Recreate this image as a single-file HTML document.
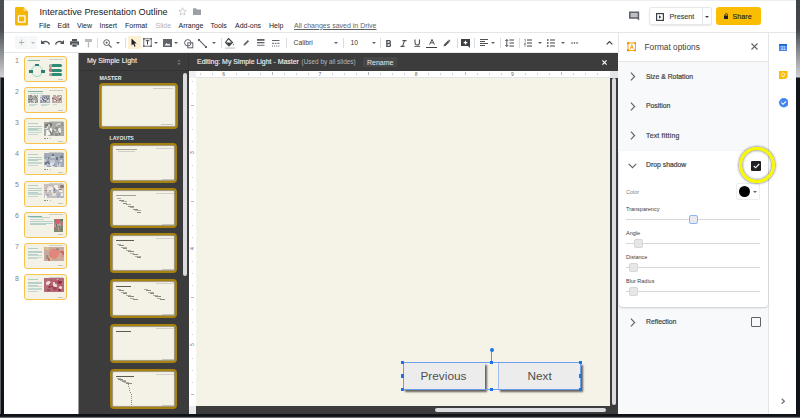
<!DOCTYPE html>
<html><head><meta charset="utf-8">
<style>
*{margin:0;padding:0;box-sizing:border-box}
html,body{width:800px;height:418px;overflow:hidden;background:#fff;font-family:"Liberation Sans",sans-serif;color:#202124}
.a{position:absolute}
.t{position:absolute;white-space:nowrap;line-height:1}
#topband{left:0;top:0;width:800px;height:1px;background:#eceef0}
.menu span{position:absolute;white-space:nowrap;font-size:7px;color:#202124;line-height:1}
.sep{position:absolute;top:38px;width:1px;height:10px;background:#dadce0}
.dd{position:absolute;top:42px;width:0;height:0;border-left:2px solid transparent;border-right:2px solid transparent;border-top:2px solid #5f6368}
.thumb{position:absolute;left:24px;width:43px;height:26px;border:1.8px solid #f7c34a;border-radius:3px;background:#f4f2e7;overflow:hidden}
.num{position:absolute;left:13px;font-size:7px;color:#80868b;width:8px;text-align:center;line-height:1}
.lthumb{position:absolute;width:68px;height:40px;border:2px solid #a8820f;border-radius:4px;background:#f4f2e7;box-shadow:inset 0 0 0.8px 0.5px #4a3e14;overflow:hidden}
.fo-row{position:absolute;left:646px;font-size:7.6px;color:#3c4043;line-height:1;-webkit-text-stroke:0.2px #3c4043;transform:scaleX(0.9);transform-origin:0 0}
.chev{position:absolute;width:5px;height:5px;border-right:1.3px solid #5f6368;border-bottom:1.3px solid #5f6368}
.lbl{position:absolute;left:626px;font-size:5.5px;color:#3c4043;line-height:1}
.sl{position:absolute;left:626px;width:134px;height:1px;background:#d5d7da}
.knob{position:absolute;width:9px;height:9px;border-radius:2px;background:#e6e6e6;border:1px solid #d7d7d7}
.h{position:absolute;width:3.3px;height:3.3px;background:#1a73e8}
</style></head><body>
<!-- frame edges -->
<div class="a" id="topband"></div>

<!-- HEADER -->
<svg class="a" style="left:15px;top:7.2px" width="13.2" height="18.4" viewBox="0 0 13.2 18.4">
<path d="M1.4 0H8.6L13.2 4.6V17A1.4 1.4 0 0 1 11.8 18.4H1.4A1.4 1.4 0 0 1 0 17V1.4A1.4 1.4 0 0 1 1.4 0Z" fill="#f5b705"/>
<path d="M8.6 0L13.2 4.6H9.6A1 1 0 0 1 8.6 3.6Z" fill="#fbd774"/>
<path d="M8.6 4.6H13.2V6.8Z" fill="#e3a000" opacity="0.6"/>
<rect x="3.4" y="9" width="6.6" height="6.2" rx="0.4" fill="none" stroke="#fff" stroke-width="1.25"/>
</svg>
<div class="t" style="left:39.5px;top:7.6px;font-size:9.2px;color:#202124">Interactive Presentation Outline</div>
<svg class="a" style="left:178px;top:7px" width="9" height="9" viewBox="0 0 24 24"><path d="M12 2l2.9 6.9 7.1.6-5.4 4.7 1.6 7L12 17.3 5.8 21.2l1.6-7L2 9.5l7.1-.6z" fill="none" stroke="#bdc1c6" stroke-width="2"/></svg>
<svg class="a" style="left:192.9px;top:7.9px" width="8" height="7" viewBox="0 0 8 7"><path d="M0 0.8V7H8V1.6H3.8L3 0.3H0.5Z" fill="#9aa0a6"/></svg>
<div class="menu">
<span style="left:39px;top:21.5px">File</span>
<span style="left:57.5px;top:21.5px">Edit</span>
<span style="left:77px;top:21.5px">View</span>
<span style="left:99.5px;top:21.5px">Insert</span>
<span style="left:125px;top:21.5px">Format</span>
<span style="left:155.5px;top:21.5px;color:#b0b3b8">Slide</span>
<span style="left:178.5px;top:21.5px">Arrange</span>
<span style="left:210.5px;top:21.5px">Tools</span>
<span style="left:235px;top:21.5px">Add-ons</span>
<span style="left:269px;top:21.5px">Help</span>
<span style="left:294px;top:21.5px;color:#5f6368;text-decoration:underline">All changes saved in Drive</span>
</div>
<!-- comment icon -->
<svg class="a" style="left:629px;top:11.3px" width="10.5" height="10" viewBox="0 0 10.5 10"><path d="M0 0.4H10.2V9.8L8.2 7.8H0Z" fill="#5f6368"/><rect x="1.6" y="2" width="7" height="4.2" fill="#c4c7ca"/><path d="M1.6 3.4H8.6M1.6 4.8H8.6" stroke="#aeb1b5" stroke-width="0.5"/></svg>
<!-- present -->
<div class="a" style="left:649px;top:7.3px;width:63px;height:18.2px;border:1px solid #e6e8eb;border-radius:3px;background:#fff;box-shadow:0 0.5px 1px rgba(60,64,67,.12)"></div>
<div class="a" style="left:701.5px;top:8px;width:1px;height:17px;background:#e6e8eb"></div>
<svg class="a" style="left:656px;top:12.5px" width="8" height="8" viewBox="0 0 8 8"><rect x="0.6" y="0.6" width="6.8" height="6.8" fill="none" stroke="#3c4043" stroke-width="1.2"/><path d="M3 2.3L5.4 4 3 5.7Z" fill="#3c4043"/></svg>
<div class="t" style="left:669.5px;top:12.5px;font-size:7.2px;color:#3c4043;-webkit-text-stroke:0.12px #3c4043">Present</div>
<div class="dd" style="left:704.5px;top:16px;border-top-color:#3c4043"></div>
<!-- share -->
<div class="a" style="left:716px;top:7.2px;width:44.5px;height:18.3px;border-radius:3px;background:#fbbc04"></div>
<svg class="a" style="left:723.7px;top:13.2px" width="4.6" height="6" viewBox="0 0 4.6 6"><path d="M1 2.6V1.9A1.3 1.3 0 0 1 3.6 1.9V2.6" fill="none" stroke="#202124" stroke-width="0.8"/><rect x="0" y="2.5" width="4.6" height="3.5" rx="0.4" fill="#202124"/></svg>
<div class="t" style="left:732.5px;top:12.5px;font-size:7.2px;color:#202124;-webkit-text-stroke:0.12px #202124">Share</div>

<!-- TOOLBAR -->
<div class="a" style="left:0;top:32px;width:800px;height:1px;background:#e3e5e8"></div>
<div class="a" style="left:0;top:52px;width:618px;height:1px;background:#e3e5e8"></div>
<div class="a" style="left:15px;top:36px;width:22px;height:13px;background:#f6f7f8"></div>
<div class="a" style="left:28px;top:36px;width:0.8px;height:13px;background:#fcfcfd"></div>
<div class="t" style="left:18.5px;top:37.5px;font-size:10px;color:#a8abb0">+</div>
<div class="dd" style="left:31px;border-top-color:#b8bbbf"></div>
<!-- undo/redo -->
<svg class="a" style="left:41px;top:39px" width="9" height="6" viewBox="0 0 9 6"><path d="M8.5 5.5C7.5 2.5 4 1.5 1.5 3.5" fill="none" stroke="#4f5358" stroke-width="1.4"/><path d="M0 1V5H4Z" fill="#4f5358"/></svg>
<svg class="a" style="left:55px;top:39px" width="9" height="6" viewBox="0 0 9 6"><path d="M0.5 5.5C1.5 2.5 5 1.5 7.5 3.5" fill="none" stroke="#4f5358" stroke-width="1.4"/><path d="M9 1V5H5Z" fill="#4f5358"/></svg>
<svg class="a" style="left:70px;top:38.5px" width="9" height="8" viewBox="0 0 9 8"><rect x="2" y="0" width="5" height="2" fill="#4f5358"/><rect x="0" y="2.2" width="9" height="4" rx="1" fill="#4f5358"/><rect x="2" y="5" width="5" height="3" fill="#4f5358" stroke="#fff" stroke-width="0.6"/></svg>
<svg class="a" style="left:84.5px;top:38.5px" width="7" height="9" viewBox="0 0 7 9"><rect x="0" y="0" width="7" height="3" fill="#b8bbbf"/><path d="M3.5 3V8.5" stroke="#b8bbbf" stroke-width="1.4"/></svg>
<div class="sep" style="left:97px"></div>
<svg class="a" style="left:102.5px;top:39px" width="9" height="9" viewBox="0 0 9 9"><circle cx="3.6" cy="3.6" r="2.9" fill="none" stroke="#5f6368" stroke-width="1"/><path d="M5.6 5.6L8.5 8.5" stroke="#5f6368" stroke-width="1.2"/><path d="M3.6 2.3V4.9M2.3 3.6H4.9" stroke="#5f6368" stroke-width="0.7"/></svg>
<div class="dd" style="left:116px"></div>
<div class="sep" style="left:124.5px"></div>
<div class="a" style="left:127.5px;top:36px;width:13px;height:12.5px;background:#fdf0d4;border-radius:1px"></div>
<svg class="a" style="left:131px;top:38px" width="6" height="9" viewBox="0 0 6 9"><path d="M0.5 0.5V7.5L2.2 6 3.5 8.7 4.6 8.2 3.4 5.6H5.7Z" fill="#202124"/></svg>
<svg class="a" style="left:142.5px;top:38px" width="9" height="9" viewBox="0 0 9 9"><rect x="0.8" y="0.8" width="7.4" height="7.4" fill="none" stroke="#5f6368" stroke-width="0.9"/><rect x="0" y="0" width="1.6" height="1.6" fill="#5f6368"/><rect x="7.4" y="0" width="1.6" height="1.6" fill="#5f6368"/><rect x="0" y="7.4" width="1.6" height="1.6" fill="#5f6368"/><rect x="7.4" y="7.4" width="1.6" height="1.6" fill="#5f6368"/><path d="M2.7 2.7H6.3M4.5 2.7V6.5" stroke="#3c4043" stroke-width="1"/></svg>
<div class="dd" style="left:154px"></div>
<svg class="a" style="left:162.5px;top:38.5px" width="9" height="8" viewBox="0 0 9 8"><rect x="0" y="0" width="9" height="8" fill="#5f6368"/><path d="M1.5 6.5L3.5 4 5 5.5 6 4.5 7.5 6.5Z" fill="#fff"/></svg>
<div class="dd" style="left:174px"></div>
<svg class="a" style="left:183.5px;top:38.5px" width="10" height="10" viewBox="0 0 10 10"><circle cx="3.8" cy="3.8" r="3.2" fill="none" stroke="#5f6368" stroke-width="1"/><rect x="3.8" y="3.8" width="5" height="5" fill="none" stroke="#5f6368" stroke-width="1"/></svg>
<svg class="a" style="left:198px;top:38.5px" width="9" height="9" viewBox="0 0 9 9"><path d="M1.2 1.2L7.8 7.8" stroke="#5f6368" stroke-width="1.1"/><rect x="0" y="0" width="2" height="2" fill="#5f6368"/><rect x="7" y="7" width="2" height="2" fill="#5f6368"/></svg>
<div class="dd" style="left:211.5px"></div>
<div class="sep" style="left:221px"></div>
<svg class="a" style="left:225px;top:37.5px" width="10" height="11" viewBox="0 0 10 11"><path d="M3.5 0.5L7.5 4.5 4 8 0.5 4.5Z" fill="none" stroke="#3c4043" stroke-width="1.1"/><path d="M1 4.5H7L4 7.5Z" fill="#3c4043"/><path d="M8.5 5.5Q9.5 7 8.5 7.5Q7.5 7 8.5 5.5Z" fill="#3c4043"/><rect x="0" y="9.5" width="10" height="1.2" fill="#c6c8cb"/></svg>
<svg class="a" style="left:242.5px;top:38.5px" width="7" height="7" viewBox="0 0 7 7"><path d="M0.4 6.6L0.8 4.9 4.8 0.9 6.1 2.2 2.1 6.2Z" fill="#5f6368"/></svg>
<svg class="a" style="left:257px;top:39.2px" width="7.5" height="7" viewBox="0 0 7.5 7"><rect x="0" y="0" width="7.5" height="1.8" fill="#5f6368"/><rect x="0" y="3" width="7.5" height="1.3" fill="#5f6368"/><rect x="0" y="5.8" width="7.5" height="0.9" fill="#5f6368"/></svg>
<svg class="a" style="left:272px;top:39.8px" width="7.5" height="7" viewBox="0 0 7.5 7"><rect x="0" y="0" width="7.5" height="1" fill="#5f6368"/><path d="M0 3.3H2.2M3 3.3H4.5M5.3 3.3H7.5M0 6H1M2.1 6H3.1M4.2 6H5.2M6.3 6H7.3" stroke="#5f6368" stroke-width="1"/></svg>
<div class="sep" style="left:285.5px"></div>
<div class="t" style="left:293.5px;top:40px;font-size:6.8px;color:#3c4043">Calibri</div>
<div class="dd" style="left:333.5px"></div>
<div class="sep" style="left:342.5px"></div>
<div class="t" style="left:350.5px;top:39.5px;font-size:6.8px;color:#3c4043">10</div>
<div class="dd" style="left:371.5px"></div>
<div class="sep" style="left:379.5px"></div>
<svg class="a" style="left:386px;top:39.5px" width="6" height="7" viewBox="0 0 6 7"><path d="M0.8 0.6H3.3A1.5 1.5 0 0 1 3.3 3.5H0.8ZM0.8 3.5H3.6A1.6 1.6 0 0 1 3.6 6.4H0.8Z" fill="none" stroke="#4d5156" stroke-width="1.3"/></svg>
<svg class="a" style="left:399.5px;top:39.5px" width="7" height="7" viewBox="0 0 7 7"><path d="M2.5 0.6H6.5M0.5 6.4H4.5M4.5 0.6L2.5 6.4" fill="none" stroke="#4d5156" stroke-width="1.1"/></svg>
<svg class="a" style="left:414px;top:39px" width="6.5" height="8" viewBox="0 0 6.5 8"><path d="M1 0.5V3.8A2.25 2.25 0 0 0 5.5 3.8V0.5" fill="none" stroke="#4d5156" stroke-width="1.1"/><path d="M0.3 7.4H6.2" stroke="#4d5156" stroke-width="0.9"/></svg>
<svg class="a" style="left:428.5px;top:39px" width="6" height="6" viewBox="0 0 6 6"><path d="M0.5 5.6L3 0.4 5.5 5.6M1.4 3.8H4.6" fill="none" stroke="#4d5156" stroke-width="1"/></svg>
<div class="a" style="left:426.3px;top:46.7px;width:10.5px;height:1.8px;background:#3c4043"></div>
<svg class="a" style="left:443px;top:38.5px" width="8" height="8" viewBox="0 0 8 8"><path d="M0.5 7.5L1.3 5.2 5 1.5 6.5 3 2.8 6.7Z" fill="#4d5156"/><path d="M5.6 0.9L7.1 2.4" stroke="#4d5156" stroke-width="1.2"/></svg>
<div class="sep" style="left:456.5px"></div>
<svg class="a" style="left:461px;top:38.5px" width="9" height="9" viewBox="0 0 9 9"><path d="M0 0H9V9L7 7H0Z" fill="#3c4043"/><path d="M4.5 1.8V5.4M2.7 3.6H6.3" stroke="#fff" stroke-width="1.1"/></svg>
<div class="sep" style="left:473.5px"></div>
<svg class="a" style="left:480px;top:39px" width="8" height="7" viewBox="0 0 8 7"><path d="M0 0.5H8M0 2.5H5M0 4.5H8M0 6.5H5" stroke="#3c4043" stroke-width="0.9"/></svg>
<div class="dd" style="left:490.5px"></div>
<div class="sep" style="left:499.5px"></div>
<svg class="a" style="left:504.5px;top:38.5px" width="9" height="8" viewBox="0 0 9 8"><path d="M1.8 0.5V7.5M0.3 2L1.8 0.5 3.3 2M0.3 6L1.8 7.5 3.3 6" fill="none" stroke="#3c4043" stroke-width="0.9"/><path d="M4.5 1H9M4.5 4H9M4.5 7H9" stroke="#3c4043" stroke-width="1"/></svg>
<div class="sep" style="left:518.5px"></div>
<svg class="a" style="left:524px;top:38.5px" width="8" height="8" viewBox="0 0 8 8"><path d="M0.5 0.5H1.3V2.5M0.3 4H1.6L0.3 5.5H1.8M0.3 7H1.8" fill="none" stroke="#3c4043" stroke-width="0.6"/><path d="M3 1H8M3 4H8M3 7H8" stroke="#3c4043" stroke-width="1"/></svg>
<div class="dd" style="left:537.5px"></div>
<svg class="a" style="left:547px;top:38.5px" width="8" height="8" viewBox="0 0 8 8"><path d="M0 1H1.5M0 4H1.5M0 7H1.5" stroke="#3c4043" stroke-width="1.3"/><path d="M3 1H8M3 4H8M3 7H8" stroke="#3c4043" stroke-width="1"/></svg>
<div class="dd" style="left:560.5px"></div>
<svg class="a" style="left:571px;top:41.5px" width="7" height="2" viewBox="0 0 7 2"><circle cx="1" cy="1" r="0.8" fill="#3c4043"/><circle cx="3.5" cy="1" r="0.8" fill="#3c4043"/><circle cx="6" cy="1" r="0.8" fill="#3c4043"/></svg>
<svg class="a" style="left:605.5px;top:40px" width="7" height="5" viewBox="0 0 7 5"><path d="M0.7 4.3L3.5 1.5 6.3 4.3" fill="none" stroke="#3c4043" stroke-width="1.2"/></svg>

<!-- FILMSTRIP -->
<div class="a" style="left:78px;top:53px;width:1px;height:361px;background:#9a9a9a"></div>
<div class="num" style="top:56.5px">1</div>
<div class="thumb" style="top:56.0px"><div class="a" style="left:2.5px;top:3.2px;width:12px;height:0.8px;background:#7ab5a8;"></div><div class="a" style="left:24px;top:1.5px;width:14px;height:0.6px;background:#cfcfc5;"></div><div class="a" style="left:5.5px;top:7.5px;width:12.5px;height:12.5px;border-radius:50%;border:1.1px solid #8fdccd"></div><div class="a" style="left:9.8px;top:6.8px;width:4px;height:2.5px;background:#2f7f6f;"></div><div class="a" style="left:4px;top:13.2px;width:4px;height:2.5px;background:#2f7f6f;"></div><div class="a" style="left:15.5px;top:13.2px;width:4px;height:2.5px;background:#2f7f6f;"></div><div class="a" style="left:25.5px;top:7.4px;width:11.5px;height:3.0px;background:#2f8a77;border-radius:1.5px;"></div><div class="a" style="left:23.5px;top:7.2px;width:3.4px;height:3.4px;border-radius:50%;background:#a8a8a2"></div><div class="a" style="left:25.5px;top:11.600000000000001px;width:11.5px;height:3.0px;background:#2f8a77;border-radius:1.5px;"></div><div class="a" style="left:23.5px;top:11.4px;width:3.4px;height:3.4px;border-radius:50%;background:#b87070"></div><div class="a" style="left:25.5px;top:15.8px;width:11.5px;height:3.0px;background:#2f8a77;border-radius:1.5px;"></div><div class="a" style="left:23.5px;top:15.600000000000001px;width:3.4px;height:3.4px;border-radius:50%;background:#ab9e86"></div><div class="a" style="left:33px;top:21.5px;width:5px;height:0.8px;background:#c8c8c0;"></div></div>
<div class="num" style="top:87.7px">2</div>
<div class="thumb" style="top:87.2px"><div class="a" style="left:2.5px;top:3.2px;width:15px;height:0.8px;background:#7ab5a8;"></div><div class="a" style="left:24px;top:1.5px;width:14px;height:0.6px;background:#cfcfc5;"></div><div class="a" style="left:4.5px;top:5.3px;width:13.299999999999999px;height:0.8px;background:#c6d9d2;"></div><div class="a" style="left:2.8px;top:6.6px;width:10px;height:8px;background:#a8a8a4;"></div><div class="a" style="left:6.15px;top:10.6px;width:0.93px;height:1.38px;background:#8a8a86;border-radius:40%;"></div><div class="a" style="left:10.6px;top:9.67px;width:1.41px;height:1.46px;background:#8a8a86;border-radius:40%;"></div><div class="a" style="left:7.07px;top:11.62px;width:0.93px;height:1.99px;background:#e0e0dc;border-radius:40%;"></div><div class="a" style="left:4.85px;top:7.54px;width:1.16px;height:1.81px;background:#8a8a86;border-radius:40%;"></div><div class="a" style="left:9.68px;top:7.77px;width:1.15px;height:0.66px;background:#8a8a86;border-radius:40%;"></div><div class="a" style="left:10.49px;top:8.3px;width:0.66px;height:1.7px;background:#8a8a86;border-radius:40%;"></div><div class="a" style="left:8.79px;top:12.28px;width:1.61px;height:1.84px;background:#e0e0dc;border-radius:40%;"></div><div class="a" style="left:10.88px;top:7.48px;width:1.62px;height:1.42px;background:#e0e0dc;border-radius:40%;"></div><div class="a" style="left:4.81px;top:13.53px;width:0.74px;height:0.82px;background:#e0e0dc;border-radius:40%;"></div><div class="a" style="left:6.3px;top:11.76px;width:1.69px;height:1.8px;background:#8a8a86;border-radius:40%;"></div><div class="a" style="left:8.0px;top:12.54px;width:1.09px;height:1.44px;background:#8a8a86;border-radius:40%;"></div><div class="a" style="left:5.07px;top:11.04px;width:1.88px;height:0.68px;background:#8a8a86;border-radius:40%;"></div><div class="a" style="left:11.65px;top:12.2px;width:0.83px;height:1.81px;background:#8a8a86;border-radius:40%;"></div><div class="a" style="left:8.66px;top:12.99px;width:0.75px;height:1.53px;background:#e0e0dc;border-radius:40%;"></div><div class="a" style="left:10.49px;top:13.8px;width:1.0px;height:0.73px;background:#6e6e6a;border-radius:40%;"></div><div class="a" style="left:10.8px;top:6.75px;width:1.08px;height:0.73px;background:#e0e0dc;border-radius:40%;"></div><div class="a" style="left:3.17px;top:10.39px;width:1.68px;height:1.83px;background:#6e6e6a;border-radius:40%;"></div><div class="a" style="left:7.69px;top:12.65px;width:1.13px;height:1.44px;background:#e0e0dc;border-radius:40%;"></div><div class="a" style="left:5.49px;top:7.06px;width:1.31px;height:2.0px;background:#8a8a86;border-radius:40%;"></div><div class="a" style="left:11.2px;top:8.37px;width:1.35px;height:1.93px;background:#e0e0dc;border-radius:40%;"></div><div class="a" style="left:10.77px;top:8.89px;width:0.82px;height:0.7px;background:#6e6e6a;border-radius:40%;"></div><div class="a" style="left:6.55px;top:10.16px;width:1.86px;height:1.15px;background:#8a8a86;border-radius:40%;"></div><div class="a" style="left:3.64px;top:12.86px;width:1.81px;height:1.57px;background:#8a8a86;border-radius:40%;"></div><div class="a" style="left:9.26px;top:12.68px;width:0.98px;height:1.5px;background:#e0e0dc;border-radius:40%;"></div><div class="a" style="left:7.2px;top:6.68px;width:1.97px;height:1.35px;background:#e0e0dc;border-radius:40%;"></div><div class="a" style="left:5.82px;top:10.68px;width:1.98px;height:1.07px;background:#6e6e6a;border-radius:40%;"></div><div class="a" style="left:7.14px;top:11.02px;width:0.68px;height:1.49px;background:#e0e0dc;border-radius:40%;"></div><div class="a" style="left:6.98px;top:10.71px;width:1.45px;height:1.02px;background:#8a8a86;border-radius:40%;"></div><div class="a" style="left:14.8px;top:6.6px;width:10px;height:8px;background:#a4aab4;"></div><div class="a" style="left:20.68px;top:8.65px;width:0.63px;height:1.14px;background:#8b9aae;border-radius:40%;"></div><div class="a" style="left:17.6px;top:9.13px;width:1.05px;height:1.13px;background:#8b9aae;border-radius:40%;"></div><div class="a" style="left:15.75px;top:11.71px;width:0.97px;height:1.71px;background:#8b9aae;border-radius:40%;"></div><div class="a" style="left:19.02px;top:11.29px;width:1.56px;height:0.82px;background:#d8dce2;border-radius:40%;"></div><div class="a" style="left:18.75px;top:11.56px;width:0.93px;height:0.89px;background:#6e7480;border-radius:40%;"></div><div class="a" style="left:20.58px;top:7.96px;width:1.44px;height:1.93px;background:#6e7480;border-radius:40%;"></div><div class="a" style="left:16.82px;top:10.21px;width:0.71px;height:1.65px;background:#d8dce2;border-radius:40%;"></div><div class="a" style="left:19.61px;top:7.97px;width:0.92px;height:0.8px;background:#8b9aae;border-radius:40%;"></div><div class="a" style="left:22.18px;top:11.08px;width:0.86px;height:1.02px;background:#8b9aae;border-radius:40%;"></div><div class="a" style="left:17.4px;top:12.3px;width:1.08px;height:0.82px;background:#d8dce2;border-radius:40%;"></div><div class="a" style="left:17.34px;top:10.29px;width:1.25px;height:1.5px;background:#6e7480;border-radius:40%;"></div><div class="a" style="left:14.84px;top:13.34px;width:1.89px;height:0.85px;background:#8b9aae;border-radius:40%;"></div><div class="a" style="left:22.42px;top:12.88px;width:1.98px;height:1.23px;background:#6e7480;border-radius:40%;"></div><div class="a" style="left:21.85px;top:11.64px;width:0.65px;height:1.26px;background:#d8dce2;border-radius:40%;"></div><div class="a" style="left:22.24px;top:11.88px;width:1.36px;height:1.85px;background:#d8dce2;border-radius:40%;"></div><div class="a" style="left:15.12px;top:12.24px;width:0.77px;height:0.97px;background:#8b9aae;border-radius:40%;"></div><div class="a" style="left:22.09px;top:10.14px;width:1.89px;height:1.86px;background:#6e7480;border-radius:40%;"></div><div class="a" style="left:19.19px;top:8.32px;width:1.27px;height:0.8px;background:#6e7480;border-radius:40%;"></div><div class="a" style="left:22.94px;top:10.76px;width:1.33px;height:1.2px;background:#d8dce2;border-radius:40%;"></div><div class="a" style="left:19.79px;top:11.5px;width:0.78px;height:1.96px;background:#6e7480;border-radius:40%;"></div><div class="a" style="left:19.56px;top:12.39px;width:1.09px;height:0.91px;background:#6e7480;border-radius:40%;"></div><div class="a" style="left:22.86px;top:7.5px;width:0.94px;height:1.01px;background:#6e7480;border-radius:40%;"></div><div class="a" style="left:18.29px;top:11.58px;width:1.28px;height:1.42px;background:#6e7480;border-radius:40%;"></div><div class="a" style="left:18.62px;top:9.74px;width:0.98px;height:1.36px;background:#6e7480;border-radius:40%;"></div><div class="a" style="left:15.18px;top:6.91px;width:1.8px;height:1.69px;background:#d8dce2;border-radius:40%;"></div><div class="a" style="left:15.49px;top:9.71px;width:1.96px;height:1.8px;background:#d8dce2;border-radius:40%;"></div><div class="a" style="left:18.34px;top:9.43px;width:0.82px;height:0.74px;background:#d8dce2;border-radius:40%;"></div><div class="a" style="left:17.72px;top:7.48px;width:1.11px;height:0.9px;background:#8b9aae;border-radius:40%;"></div><div class="a" style="left:26.8px;top:6.6px;width:10px;height:8px;background:#b9a8a4;"></div><div class="a" style="left:34.27px;top:10.21px;width:0.6px;height:1.62px;background:#ffffff;border-radius:40%;"></div><div class="a" style="left:33.75px;top:9.09px;width:1.12px;height:1.46px;background:#ffffff;border-radius:40%;"></div><div class="a" style="left:29.98px;top:9.96px;width:1.47px;height:1.23px;background:#d0b0a8;border-radius:40%;"></div><div class="a" style="left:30.55px;top:6.71px;width:1.04px;height:1.93px;background:#ffffff;border-radius:40%;"></div><div class="a" style="left:27.42px;top:9.33px;width:1.35px;height:1.59px;background:#8a6a64;border-radius:40%;"></div><div class="a" style="left:29.8px;top:13.69px;width:0.78px;height:0.68px;background:#d0b0a8;border-radius:40%;"></div><div class="a" style="left:30.65px;top:7.46px;width:1.71px;height:1.0px;background:#d0b0a8;border-radius:40%;"></div><div class="a" style="left:33.51px;top:10.71px;width:1.53px;height:1.85px;background:#d0b0a8;border-radius:40%;"></div><div class="a" style="left:34.07px;top:11.36px;width:1.05px;height:1.36px;background:#8a6a64;border-radius:40%;"></div><div class="a" style="left:27.21px;top:7.18px;width:0.8px;height:1.69px;background:#ffffff;border-radius:40%;"></div><div class="a" style="left:33.75px;top:8.94px;width:1.52px;height:1.15px;background:#ffffff;border-radius:40%;"></div><div class="a" style="left:31.31px;top:11.62px;width:0.64px;height:0.8px;background:#8a6a64;border-radius:40%;"></div><div class="a" style="left:27.11px;top:11.41px;width:1.41px;height:1.73px;background:#d0b0a8;border-radius:40%;"></div><div class="a" style="left:31.6px;top:7.3px;width:1.34px;height:0.96px;background:#d0b0a8;border-radius:40%;"></div><div class="a" style="left:32.05px;top:12.33px;width:0.69px;height:1.08px;background:#ffffff;border-radius:40%;"></div><div class="a" style="left:30.43px;top:11.14px;width:2.0px;height:1.52px;background:#8a6a64;border-radius:40%;"></div><div class="a" style="left:35.29px;top:10.24px;width:0.95px;height:1.46px;background:#ffffff;border-radius:40%;"></div><div class="a" style="left:35.05px;top:12.54px;width:1.13px;height:0.96px;background:#ffffff;border-radius:40%;"></div><div class="a" style="left:31.91px;top:12.69px;width:1.18px;height:1.41px;background:#d0b0a8;border-radius:40%;"></div><div class="a" style="left:34.63px;top:7.57px;width:1.28px;height:1.51px;background:#ffffff;border-radius:40%;"></div><div class="a" style="left:32.88px;top:12.97px;width:1.3px;height:1.3px;background:#d0b0a8;border-radius:40%;"></div><div class="a" style="left:29.04px;top:8.02px;width:1.61px;height:0.89px;background:#d0b0a8;border-radius:40%;"></div><div class="a" style="left:34.19px;top:9.88px;width:1.32px;height:1.91px;background:#8a6a64;border-radius:40%;"></div><div class="a" style="left:31.84px;top:10.22px;width:1.54px;height:1.8px;background:#8a6a64;border-radius:40%;"></div><div class="a" style="left:28.99px;top:12.18px;width:1.85px;height:1.06px;background:#ffffff;border-radius:40%;"></div><div class="a" style="left:29.75px;top:11.92px;width:0.84px;height:1.13px;background:#ffffff;border-radius:40%;"></div><div class="a" style="left:32.98px;top:7.92px;width:1.19px;height:1.59px;background:#d0b0a8;border-radius:40%;"></div><div class="a" style="left:31.39px;top:9.6px;width:1.77px;height:1.76px;background:#d0b0a8;border-radius:40%;"></div><div class="a" style="left:3.5px;top:15.5px;width:9px;height:0.8px;background:#c6d9d2;"></div><div class="a" style="left:3.5px;top:17.1px;width:6.3px;height:0.8px;background:#c6d9d2;"></div><div class="a" style="left:15.5px;top:15.5px;width:9px;height:0.8px;background:#c6d9d2;"></div><div class="a" style="left:15.5px;top:17.1px;width:6.3px;height:0.8px;background:#c6d9d2;"></div><div class="a" style="left:27.5px;top:15.5px;width:4.8999999999999995px;height:0.8px;background:#c6d9d2;"></div><div class="a" style="left:33px;top:21.5px;width:5px;height:0.8px;background:#c8c8c0;"></div></div>
<div class="num" style="top:118.8px">3</div>
<div class="thumb" style="top:118.3px"><div class="a" style="left:2.8px;top:3.8px;width:10px;height:0.9px;background:#b5d0c6;"></div><div class="a" style="left:24px;top:1.5px;width:14px;height:0.6px;background:#cfcfc5;"></div><div class="a" style="left:2.8px;top:6.8px;width:14.5px;height:0.8px;background:#b5d0c6;"></div><div class="a" style="left:2.8px;top:8.4px;width:14.5px;height:0.8px;background:#b5d0c6;"></div><div class="a" style="left:2.8px;top:10.0px;width:10.149999999999999px;height:0.8px;background:#b5d0c6;"></div><div class="a" style="left:2.8px;top:11.2px;width:14px;height:0.8px;background:#c3d8d0;"></div><div class="a" style="left:2.8px;top:12.799999999999999px;width:14px;height:0.8px;background:#c3d8d0;"></div><div class="a" style="left:2.8px;top:14.399999999999999px;width:9.799999999999999px;height:0.8px;background:#c3d8d0;"></div><div class="a" style="left:19px;top:2.8px;width:20.4px;height:14px;background:#a8a8a4;"></div><div class="a" style="left:33.86px;top:12.17px;width:1.43px;height:3.38px;background:#6e6e6a;border-radius:40%;"></div><div class="a" style="left:23.19px;top:11.65px;width:2.56px;height:1.67px;background:#6e6e6a;border-radius:40%;"></div><div class="a" style="left:22.98px;top:4.86px;width:3.96px;height:3.15px;background:#8e8e8a;border-radius:40%;"></div><div class="a" style="left:31.68px;top:3.22px;width:1.62px;height:2.6px;background:#8e8e8a;border-radius:40%;"></div><div class="a" style="left:22.43px;top:3.96px;width:1.71px;height:1.23px;background:#6e6e6a;border-radius:40%;"></div><div class="a" style="left:36.21px;top:3.24px;width:1.56px;height:1.75px;background:#d0d0cc;border-radius:40%;"></div><div class="a" style="left:19.12px;top:6.57px;width:2.88px;height:2.73px;background:#d0d0cc;border-radius:40%;"></div><div class="a" style="left:30.66px;top:12.22px;width:2.31px;height:1.31px;background:#d0d0cc;border-radius:40%;"></div><div class="a" style="left:21.15px;top:5.98px;width:2.34px;height:2.42px;background:#d0d0cc;border-radius:40%;"></div><div class="a" style="left:36.13px;top:3.84px;width:1.55px;height:3.23px;background:#8e8e8a;border-radius:40%;"></div><div class="a" style="left:26.76px;top:10.76px;width:3.16px;height:2.0px;background:#8e8e8a;border-radius:40%;"></div><div class="a" style="left:25.39px;top:8.82px;width:1.53px;height:3.37px;background:#f4f4f0;border-radius:40%;"></div><div class="a" style="left:25.64px;top:11.2px;width:1.55px;height:2.3px;background:#f4f4f0;border-radius:40%;"></div><div class="a" style="left:31.45px;top:4.5px;width:3.34px;height:2.66px;background:#8e8e8a;border-radius:40%;"></div><div class="a" style="left:21.05px;top:13.35px;width:3.77px;height:2.68px;background:#e8e8e4;border-radius:40%;"></div><div class="a" style="left:29.75px;top:7.57px;width:3.85px;height:2.66px;background:#8e8e8a;border-radius:40%;"></div><div class="a" style="left:24.41px;top:4.88px;width:3.07px;height:2.21px;background:#6e6e6a;border-radius:40%;"></div><div class="a" style="left:29.45px;top:9.97px;width:1.53px;height:1.55px;background:#d0d0cc;border-radius:40%;"></div><div class="a" style="left:25.96px;top:13.49px;width:2.25px;height:1.75px;background:#6e6e6a;border-radius:40%;"></div><div class="a" style="left:31.39px;top:9.1px;width:2.59px;height:1.77px;background:#8e8e8a;border-radius:40%;"></div><div class="a" style="left:32.33px;top:3.62px;width:3.92px;height:2.19px;background:#d0d0cc;border-radius:40%;"></div><div class="a" style="left:23.53px;top:4.06px;width:3.64px;height:1.39px;background:#6e6e6a;border-radius:40%;"></div><div class="a" style="left:20.97px;top:10.28px;width:2.84px;height:3.29px;background:#f4f4f0;border-radius:40%;"></div><div class="a" style="left:33.67px;top:11.12px;width:2.41px;height:2.89px;background:#f4f4f0;border-radius:40%;"></div><div class="a" style="left:32.92px;top:8.7px;width:2.96px;height:3.17px;background:#e8e8e4;border-radius:40%;"></div><div class="a" style="left:23.39px;top:12.49px;width:2.85px;height:1.6px;background:#6e6e6a;border-radius:40%;"></div><div class="a" style="left:25.83px;top:12.43px;width:3.63px;height:2.18px;background:#8e8e8a;border-radius:40%;"></div><div class="a" style="left:30.15px;top:14.03px;width:2.8px;height:2.51px;background:#8e8e8a;border-radius:40%;"></div><div class="a" style="left:19.5px;top:4.95px;width:3.78px;height:2.71px;background:#6e6e6a;border-radius:40%;"></div><div class="a" style="left:23.41px;top:4.72px;width:1.53px;height:2.92px;background:#d0d0cc;border-radius:40%;"></div><div class="a" style="left:22.94px;top:11.75px;width:1.79px;height:2.98px;background:#d0d0cc;border-radius:40%;"></div><div class="a" style="left:31.4px;top:4.66px;width:1.54px;height:1.79px;background:#d0d0cc;border-radius:40%;"></div><div class="a" style="left:19.86px;top:6.9px;width:3.49px;height:2.6px;background:#e8e8e4;border-radius:40%;"></div><div class="a" style="left:19.34px;top:6.77px;width:2.67px;height:2.31px;background:#8e8e8a;border-radius:40%;"></div><div class="a" style="left:21.24px;top:12.44px;width:3.71px;height:2.77px;background:#f4f4f0;border-radius:40%;"></div><div class="a" style="left:20.36px;top:15.52px;width:3.44px;height:1.2px;background:#e8e8e4;border-radius:40%;"></div><div class="a" style="left:19px;top:18.3px;width:1.6px;height:1.2px;background:#8a8a86;"></div><div class="a" style="left:21.8px;top:18.3px;width:1.6px;height:1.2px;background:#8a8a86;"></div><div class="a" style="left:24.6px;top:18.3px;width:1.2px;height:1.2px;background:#b8b8b4;"></div><div class="a" style="left:33px;top:21.5px;width:5px;height:0.8px;background:#c8c8c0;"></div></div>
<div class="num" style="top:149.9px">4</div>
<div class="thumb" style="top:149.4px"><div class="a" style="left:2.8px;top:3.8px;width:10px;height:0.9px;background:#b5d0c6;"></div><div class="a" style="left:24px;top:1.5px;width:14px;height:0.6px;background:#cfcfc5;"></div><div class="a" style="left:2.8px;top:6.8px;width:14.5px;height:0.8px;background:#b5d0c6;"></div><div class="a" style="left:2.8px;top:8.4px;width:14.5px;height:0.8px;background:#b5d0c6;"></div><div class="a" style="left:2.8px;top:10.0px;width:10.149999999999999px;height:0.8px;background:#b5d0c6;"></div><div class="a" style="left:2.8px;top:11.2px;width:14px;height:0.8px;background:#c3d8d0;"></div><div class="a" style="left:2.8px;top:12.799999999999999px;width:14px;height:0.8px;background:#c3d8d0;"></div><div class="a" style="left:2.8px;top:14.399999999999999px;width:9.799999999999999px;height:0.8px;background:#c3d8d0;"></div><div class="a" style="left:19px;top:2.8px;width:20.4px;height:14px;background:#a4acb8;"></div><div class="a" style="left:26.22px;top:11.0px;width:3.89px;height:3.17px;background:#c8ccd4;border-radius:40%;"></div><div class="a" style="left:26.46px;top:12.1px;width:2.13px;height:2.99px;background:#e6e8ea;border-radius:40%;"></div><div class="a" style="left:20.23px;top:12.81px;width:2.34px;height:2.25px;background:#e6e8ea;border-radius:40%;"></div><div class="a" style="left:27.04px;top:12.0px;width:3.08px;height:1.85px;background:#c8ccd4;border-radius:40%;"></div><div class="a" style="left:19.67px;top:5.83px;width:2.48px;height:2.2px;background:#8a9ab2;border-radius:40%;"></div><div class="a" style="left:26.19px;top:14.46px;width:2.5px;height:1.98px;background:#e6e8ea;border-radius:40%;"></div><div class="a" style="left:34.77px;top:9.21px;width:1.96px;height:2.0px;background:#e6e8ea;border-radius:40%;"></div><div class="a" style="left:26.5px;top:4.9px;width:1.82px;height:1.53px;background:#6a7282;border-radius:40%;"></div><div class="a" style="left:27.31px;top:4.91px;width:1.62px;height:2.57px;background:#6a7282;border-radius:40%;"></div><div class="a" style="left:19.59px;top:11.46px;width:2.38px;height:1.88px;background:#e6e8ea;border-radius:40%;"></div><div class="a" style="left:19.48px;top:14.32px;width:2.38px;height:2.06px;background:#e6e8ea;border-radius:40%;"></div><div class="a" style="left:22.52px;top:6.78px;width:1.91px;height:2.05px;background:#6a7282;border-radius:40%;"></div><div class="a" style="left:19.94px;top:11.96px;width:2.21px;height:1.41px;background:#8a9ab2;border-radius:40%;"></div><div class="a" style="left:31.92px;top:13.03px;width:4.03px;height:3.36px;background:#c8ccd4;border-radius:40%;"></div><div class="a" style="left:34.04px;top:10.5px;width:1.94px;height:1.75px;background:#8a9ab2;border-radius:40%;"></div><div class="a" style="left:26.95px;top:3.94px;width:2.13px;height:1.25px;background:#6a7282;border-radius:40%;"></div><div class="a" style="left:19.36px;top:8.46px;width:1.52px;height:2.74px;background:#c8ccd4;border-radius:40%;"></div><div class="a" style="left:36.13px;top:5.07px;width:1.38px;height:2.68px;background:#c8ccd4;border-radius:40%;"></div><div class="a" style="left:25.4px;top:10.53px;width:2.19px;height:2.26px;background:#c8ccd4;border-radius:40%;"></div><div class="a" style="left:36.33px;top:3.8px;width:2.09px;height:2.56px;background:#8a9ab2;border-radius:40%;"></div><div class="a" style="left:28.46px;top:9.31px;width:1.75px;height:2.1px;background:#c8ccd4;border-radius:40%;"></div><div class="a" style="left:32.71px;top:12.09px;width:1.72px;height:2.88px;background:#8a9ab2;border-radius:40%;"></div><div class="a" style="left:25.86px;top:5.56px;width:3.86px;height:1.98px;background:#c8ccd4;border-radius:40%;"></div><div class="a" style="left:28.22px;top:11.02px;width:2.21px;height:3.07px;background:#c8ccd4;border-radius:40%;"></div><div class="a" style="left:21.83px;top:12.4px;width:3.94px;height:1.22px;background:#c8ccd4;border-radius:40%;"></div><div class="a" style="left:31.49px;top:6.4px;width:1.49px;height:2.77px;background:#6a7282;border-radius:40%;"></div><div class="a" style="left:26.5px;top:12.49px;width:3.73px;height:3.2px;background:#8a9ab2;border-radius:40%;"></div><div class="a" style="left:22.18px;top:12.93px;width:4.07px;height:1.12px;background:#6a7282;border-radius:40%;"></div><div class="a" style="left:27.2px;top:12.78px;width:2.19px;height:1.86px;background:#e6e8ea;border-radius:40%;"></div><div class="a" style="left:21.82px;top:11.03px;width:1.91px;height:1.24px;background:#6a7282;border-radius:40%;"></div><div class="a" style="left:22.94px;top:13.18px;width:1.54px;height:1.8px;background:#c8ccd4;border-radius:40%;"></div><div class="a" style="left:24.66px;top:12.27px;width:2.67px;height:3.28px;background:#e6e8ea;border-radius:40%;"></div><div class="a" style="left:19.74px;top:11.99px;width:2.56px;height:2.6px;background:#6a7282;border-radius:40%;"></div><div class="a" style="left:34.77px;top:6.02px;width:3.68px;height:1.36px;background:#6a7282;border-radius:40%;"></div><div class="a" style="left:33.8px;top:10.4px;width:2.55px;height:1.65px;background:#c8ccd4;border-radius:40%;"></div><div class="a" style="left:24.88px;top:9.32px;width:3.4px;height:3.19px;background:#c8ccd4;border-radius:40%;"></div><div class="a" style="left:19px;top:18.3px;width:1.6px;height:1.2px;background:#8a8a86;"></div><div class="a" style="left:21.8px;top:18.3px;width:1.6px;height:1.2px;background:#8a8a86;"></div><div class="a" style="left:24.6px;top:18.3px;width:1.2px;height:1.2px;background:#b8b8b4;"></div><div class="a" style="left:33px;top:21.5px;width:5px;height:0.8px;background:#c8c8c0;"></div></div>
<div class="num" style="top:181.1px">5</div>
<div class="thumb" style="top:180.6px"><div class="a" style="left:2.8px;top:3.8px;width:10px;height:0.9px;background:#b5d0c6;"></div><div class="a" style="left:24px;top:1.5px;width:14px;height:0.6px;background:#cfcfc5;"></div><div class="a" style="left:2.8px;top:6.8px;width:14.5px;height:0.8px;background:#b5d0c6;"></div><div class="a" style="left:2.8px;top:8.4px;width:14.5px;height:0.8px;background:#b5d0c6;"></div><div class="a" style="left:2.8px;top:10.0px;width:10.149999999999999px;height:0.8px;background:#b5d0c6;"></div><div class="a" style="left:2.8px;top:11.2px;width:14px;height:0.8px;background:#c3d8d0;"></div><div class="a" style="left:2.8px;top:12.799999999999999px;width:14px;height:0.8px;background:#c3d8d0;"></div><div class="a" style="left:2.8px;top:14.399999999999999px;width:9.799999999999999px;height:0.8px;background:#c3d8d0;"></div><div class="a" style="left:19px;top:2.8px;width:20.4px;height:14px;background:#c8c0bc;"></div><div class="a" style="left:35.02px;top:8.21px;width:3.45px;height:1.81px;background:#e8e0dc;border-radius:40%;"></div><div class="a" style="left:27.63px;top:11.24px;width:1.81px;height:2.4px;background:#ffffff;border-radius:40%;"></div><div class="a" style="left:32.72px;top:14.28px;width:2.2px;height:1.58px;background:#9eb0c8;border-radius:40%;"></div><div class="a" style="left:29.89px;top:5.23px;width:2.43px;height:2.66px;background:#9eb0c8;border-radius:40%;"></div><div class="a" style="left:22.96px;top:8.39px;width:3.62px;height:1.27px;background:#9eb0c8;border-radius:40%;"></div><div class="a" style="left:36.27px;top:11.87px;width:1.85px;height:1.51px;background:#f4f0ee;border-radius:40%;"></div><div class="a" style="left:34.22px;top:6.91px;width:2.55px;height:2.81px;background:#8a7a74;border-radius:40%;"></div><div class="a" style="left:27.04px;top:11.01px;width:3.8px;height:3.38px;background:#e8e0dc;border-radius:40%;"></div><div class="a" style="left:19.62px;top:13.79px;width:2.56px;height:2.52px;background:#ffffff;border-radius:40%;"></div><div class="a" style="left:32.47px;top:6.52px;width:1.75px;height:1.35px;background:#f4f0ee;border-radius:40%;"></div><div class="a" style="left:22.7px;top:5.24px;width:1.4px;height:2.24px;background:#e8e0dc;border-radius:40%;"></div><div class="a" style="left:32.31px;top:11.81px;width:2.46px;height:1.94px;background:#9eb0c8;border-radius:40%;"></div><div class="a" style="left:36.05px;top:8.05px;width:1.63px;height:2.18px;background:#8a7a74;border-radius:40%;"></div><div class="a" style="left:32.12px;top:13.6px;width:1.66px;height:2.94px;background:#9eb0c8;border-radius:40%;"></div><div class="a" style="left:34.49px;top:8.42px;width:3.92px;height:2.15px;background:#f4f0ee;border-radius:40%;"></div><div class="a" style="left:24.35px;top:3.11px;width:1.86px;height:3.4px;background:#9eb0c8;border-radius:40%;"></div><div class="a" style="left:23.95px;top:5.46px;width:3.76px;height:3.04px;background:#f4f0ee;border-radius:40%;"></div><div class="a" style="left:29.16px;top:9.53px;width:1.25px;height:1.43px;background:#8a7a74;border-radius:40%;"></div><div class="a" style="left:35.19px;top:13.01px;width:3.94px;height:1.12px;background:#9eb0c8;border-radius:40%;"></div><div class="a" style="left:35.04px;top:3.19px;width:4.02px;height:2.99px;background:#8a7a74;border-radius:40%;"></div><div class="a" style="left:35.73px;top:13.01px;width:1.91px;height:1.78px;background:#f4f0ee;border-radius:40%;"></div><div class="a" style="left:24.49px;top:5.93px;width:2.78px;height:1.34px;background:#e8e0dc;border-radius:40%;"></div><div class="a" style="left:19.79px;top:8.07px;width:2.42px;height:1.74px;background:#8a7a74;border-radius:40%;"></div><div class="a" style="left:23.1px;top:4.29px;width:3.83px;height:3.04px;background:#e8e0dc;border-radius:40%;"></div><div class="a" style="left:28.78px;top:5.85px;width:2.68px;height:3.1px;background:#8a7a74;border-radius:40%;"></div><div class="a" style="left:20.15px;top:12.37px;width:1.35px;height:2.28px;background:#e8e0dc;border-radius:40%;"></div><div class="a" style="left:35.57px;top:12.0px;width:2.56px;height:2.7px;background:#f4f0ee;border-radius:40%;"></div><div class="a" style="left:30.19px;top:6.32px;width:2.7px;height:2.0px;background:#ffffff;border-radius:40%;"></div><div class="a" style="left:28.42px;top:7.09px;width:3.18px;height:3.48px;background:#9eb0c8;border-radius:40%;"></div><div class="a" style="left:23.58px;top:6.26px;width:2.49px;height:1.78px;background:#f4f0ee;border-radius:40%;"></div><div class="a" style="left:28.78px;top:7.8px;width:1.67px;height:1.87px;background:#8a7a74;border-radius:40%;"></div><div class="a" style="left:29.3px;top:3.13px;width:3.59px;height:3.34px;background:#f4f0ee;border-radius:40%;"></div><div class="a" style="left:21.19px;top:12.7px;width:2.93px;height:1.4px;background:#9eb0c8;border-radius:40%;"></div><div class="a" style="left:26.01px;top:8.61px;width:1.52px;height:2.71px;background:#e8e0dc;border-radius:40%;"></div><div class="a" style="left:22.37px;top:6.9px;width:1.78px;height:3.31px;background:#e8e0dc;border-radius:40%;"></div><div class="a" style="left:36.36px;top:14.35px;width:2.13px;height:1.76px;background:#9eb0c8;border-radius:40%;"></div><div class="a" style="left:19px;top:18.3px;width:1.6px;height:1.2px;background:#8a8a86;"></div><div class="a" style="left:21.8px;top:18.3px;width:1.6px;height:1.2px;background:#8a8a86;"></div><div class="a" style="left:24.6px;top:18.3px;width:1.2px;height:1.2px;background:#b8b8b4;"></div><div class="a" style="left:33px;top:21.5px;width:5px;height:0.8px;background:#c8c8c0;"></div></div>
<div class="num" style="top:212.2px">6</div>
<div class="thumb" style="top:211.8px"><div class="a" style="left:2.5px;top:2.8px;width:14px;height:0.8px;background:#7ab5a8;"></div><div class="a" style="left:24px;top:1.5px;width:14px;height:0.6px;background:#cfcfc5;"></div><div class="a" style="left:4.5px;top:4.6px;width:20px;height:0.8px;background:#c5d5cf;"></div><div class="a" style="left:4.5px;top:6.199999999999999px;width:14.0px;height:0.8px;background:#c5d5cf;"></div><div class="a" style="left:4.8px;top:8.2px;width:23px;height:0.8px;background:#b5d0c6;"></div><div class="a" style="left:4.8px;top:9.799999999999999px;width:23px;height:0.8px;background:#b5d0c6;"></div><div class="a" style="left:4.8px;top:11.399999999999999px;width:16.099999999999998px;height:0.8px;background:#b5d0c6;"></div><div class="a" style="left:29px;top:6px;width:9px;height:13.5px;background:#7f8a72;"></div><div class="a" style="left:29.27px;top:10.65px;width:1.31px;height:2.35px;background:#c0a0a8;border-radius:40%;"></div><div class="a" style="left:30.66px;top:8.45px;width:1.78px;height:1.26px;background:#d9526b;border-radius:40%;"></div><div class="a" style="left:33.79px;top:7.5px;width:1.42px;height:1.34px;background:#d9526b;border-radius:40%;"></div><div class="a" style="left:34.03px;top:10.39px;width:1.73px;height:3.32px;background:#c0a0a8;border-radius:40%;"></div><div class="a" style="left:33.41px;top:8.05px;width:1.12px;height:1.74px;background:#c0a0a8;border-radius:40%;"></div><div class="a" style="left:35.57px;top:8.15px;width:1.75px;height:1.41px;background:#c0a0a8;border-radius:40%;"></div><div class="a" style="left:30.08px;top:6.6px;width:1.39px;height:2.56px;background:#e07080;border-radius:40%;"></div><div class="a" style="left:30.05px;top:7.6px;width:0.93px;height:2.57px;background:#e07080;border-radius:40%;"></div><div class="a" style="left:29.83px;top:10.5px;width:1.21px;height:1.96px;background:#d9526b;border-radius:40%;"></div><div class="a" style="left:30.18px;top:7.54px;width:0.89px;height:1.38px;background:#5a6a50;border-radius:40%;"></div><div class="a" style="left:35.8px;top:6.08px;width:1.72px;height:2.47px;background:#5a6a50;border-radius:40%;"></div><div class="a" style="left:30.77px;top:9.6px;width:1.8px;height:3.33px;background:#c0a0a8;border-radius:40%;"></div><div class="a" style="left:32.94px;top:13.75px;width:0.67px;height:3.02px;background:#c0a0a8;border-radius:40%;"></div><div class="a" style="left:33.17px;top:11.02px;width:1.26px;height:2.15px;background:#c0a0a8;border-radius:40%;"></div><div class="a" style="left:33.4px;top:17.16px;width:1.59px;height:1.54px;background:#e07080;border-radius:40%;"></div><div class="a" style="left:36.75px;top:9.31px;width:0.92px;height:3.05px;background:#e07080;border-radius:40%;"></div><div class="a" style="left:29.47px;top:12.78px;width:0.7px;height:2.47px;background:#e07080;border-radius:40%;"></div><div class="a" style="left:36.23px;top:15.84px;width:0.68px;height:1.11px;background:#5a6a50;border-radius:40%;"></div><div class="a" style="left:29.72px;top:11.76px;width:1.2px;height:2.84px;background:#c0a0a8;border-radius:40%;"></div><div class="a" style="left:30.76px;top:11.05px;width:0.95px;height:2.44px;background:#5a6a50;border-radius:40%;"></div><div class="a" style="left:30px;top:6.5px;width:5px;height:4.5px;background:#de5a70;border-radius:50%;"></div><div class="a" style="left:33px;top:21.5px;width:5px;height:0.8px;background:#c8c8c0;"></div></div>
<div class="num" style="top:243.4px">7</div>
<div class="thumb" style="top:242.9px"><div class="a" style="left:2.8px;top:3.8px;width:10px;height:0.9px;background:#b5d0c6;"></div><div class="a" style="left:24px;top:1.5px;width:14px;height:0.6px;background:#cfcfc5;"></div><div class="a" style="left:2.8px;top:6.8px;width:14.5px;height:0.8px;background:#b5d0c6;"></div><div class="a" style="left:2.8px;top:8.4px;width:14.5px;height:0.8px;background:#b5d0c6;"></div><div class="a" style="left:2.8px;top:10.0px;width:10.149999999999999px;height:0.8px;background:#b5d0c6;"></div><div class="a" style="left:2.8px;top:11.2px;width:14px;height:0.8px;background:#c3d8d0;"></div><div class="a" style="left:2.8px;top:12.799999999999999px;width:14px;height:0.8px;background:#c3d8d0;"></div><div class="a" style="left:2.8px;top:14.399999999999999px;width:9.799999999999999px;height:0.8px;background:#c3d8d0;"></div><div class="a" style="left:19px;top:2.8px;width:20.4px;height:14px;background:#c8aaa0;"></div><div class="a" style="left:31.19px;top:11.65px;width:3.04px;height:2.53px;background:#e0c080;border-radius:40%;"></div><div class="a" style="left:23.79px;top:13.44px;width:3.69px;height:3.11px;background:#e0c080;border-radius:40%;"></div><div class="a" style="left:23.13px;top:14.19px;width:1.74px;height:2.55px;background:#c86a60;border-radius:40%;"></div><div class="a" style="left:27.32px;top:7.86px;width:2.03px;height:3.42px;background:#c86a60;border-radius:40%;"></div><div class="a" style="left:26.22px;top:9.98px;width:4.04px;height:2.38px;background:#e88a7a;border-radius:40%;"></div><div class="a" style="left:29.98px;top:6.17px;width:2.42px;height:2.43px;background:#c86a60;border-radius:40%;"></div><div class="a" style="left:35.42px;top:7.19px;width:3.66px;height:2.03px;background:#c86a60;border-radius:40%;"></div><div class="a" style="left:21.24px;top:11.37px;width:1.38px;height:2.3px;background:#a08a80;border-radius:40%;"></div><div class="a" style="left:24.15px;top:8.87px;width:3.26px;height:1.98px;background:#a08a80;border-radius:40%;"></div><div class="a" style="left:31.28px;top:3.92px;width:2.48px;height:3.28px;background:#a08a80;border-radius:40%;"></div><div class="a" style="left:25.96px;top:10.4px;width:1.64px;height:1.64px;background:#c86a60;border-radius:40%;"></div><div class="a" style="left:26.24px;top:5.24px;width:3.75px;height:1.62px;background:#e88a7a;border-radius:40%;"></div><div class="a" style="left:28.42px;top:10.68px;width:2.76px;height:3.31px;background:#c86a60;border-radius:40%;"></div><div class="a" style="left:21.16px;top:12.7px;width:2.48px;height:2.74px;background:#a08a80;border-radius:40%;"></div><div class="a" style="left:24.68px;top:9.74px;width:1.87px;height:1.45px;background:#e88a7a;border-radius:40%;"></div><div class="a" style="left:20.43px;top:3.12px;width:3.58px;height:2.55px;background:#e0c080;border-radius:40%;"></div><div class="a" style="left:36.82px;top:8.34px;width:2.32px;height:2.29px;background:#c86a60;border-radius:40%;"></div><div class="a" style="left:26.81px;top:10.13px;width:2.33px;height:2.34px;background:#e0c080;border-radius:40%;"></div><div class="a" style="left:36.56px;top:11.54px;width:2.47px;height:1.35px;background:#e88a7a;border-radius:40%;"></div><div class="a" style="left:33.17px;top:6.27px;width:1.41px;height:3.21px;background:#e88a7a;border-radius:40%;"></div><div class="a" style="left:23.5px;top:5.5px;width:10px;height:10px;background:#e2857a;border-radius:50%;"></div><div class="a" style="left:33px;top:21.5px;width:5px;height:0.8px;background:#c8c8c0;"></div></div>
<div class="num" style="top:274.5px">8</div>
<div class="thumb" style="top:274.0px"><div class="a" style="left:2.8px;top:3.8px;width:10px;height:0.9px;background:#b5d0c6;"></div><div class="a" style="left:24px;top:1.5px;width:14px;height:0.6px;background:#cfcfc5;"></div><div class="a" style="left:2.8px;top:6.8px;width:14.5px;height:0.8px;background:#b5d0c6;"></div><div class="a" style="left:2.8px;top:8.4px;width:14.5px;height:0.8px;background:#b5d0c6;"></div><div class="a" style="left:2.8px;top:10.0px;width:10.149999999999999px;height:0.8px;background:#b5d0c6;"></div><div class="a" style="left:2.8px;top:11.2px;width:14px;height:0.8px;background:#c3d8d0;"></div><div class="a" style="left:2.8px;top:12.799999999999999px;width:14px;height:0.8px;background:#c3d8d0;"></div><div class="a" style="left:2.8px;top:14.399999999999999px;width:14px;height:0.8px;background:#c3d8d0;"></div><div class="a" style="left:2.8px;top:16.0px;width:9.799999999999999px;height:0.8px;background:#c3d8d0;"></div><div class="a" style="left:19px;top:2.8px;width:20.4px;height:14px;background:#b06a78;"></div><div class="a" style="left:30.52px;top:3.81px;width:2.15px;height:3.29px;background:#f0d8dc;border-radius:40%;"></div><div class="a" style="left:22.92px;top:6.28px;width:3.06px;height:3.22px;background:#a04050;border-radius:40%;"></div><div class="a" style="left:27.52px;top:14.32px;width:3.96px;height:1.24px;background:#c05a6a;border-radius:40%;"></div><div class="a" style="left:23.07px;top:8.74px;width:2.86px;height:1.32px;background:#a04050;border-radius:40%;"></div><div class="a" style="left:31.15px;top:8.37px;width:2.04px;height:3.46px;background:#c05a6a;border-radius:40%;"></div><div class="a" style="left:29.31px;top:9.82px;width:2.86px;height:1.94px;background:#f0d8dc;border-radius:40%;"></div><div class="a" style="left:32.38px;top:13.75px;width:2.99px;height:1.96px;background:#c05a6a;border-radius:40%;"></div><div class="a" style="left:34.35px;top:9.83px;width:2.5px;height:2.84px;background:#a04050;border-radius:40%;"></div><div class="a" style="left:32.73px;top:14.39px;width:3.71px;height:1.63px;background:#8a2a3a;border-radius:40%;"></div><div class="a" style="left:32.92px;top:6.49px;width:3.87px;height:2.31px;background:#8a2a3a;border-radius:40%;"></div><div class="a" style="left:35.05px;top:11.17px;width:2.16px;height:1.71px;background:#8a2a3a;border-radius:40%;"></div><div class="a" style="left:23.13px;top:6.22px;width:1.9px;height:1.99px;background:#f0d8dc;border-radius:40%;"></div><div class="a" style="left:25.27px;top:4.05px;width:1.98px;height:2.77px;background:#c05a6a;border-radius:40%;"></div><div class="a" style="left:22.08px;top:8.82px;width:2.09px;height:1.53px;background:#c05a6a;border-radius:40%;"></div><div class="a" style="left:30.31px;top:4.78px;width:1.84px;height:2.72px;background:#a04050;border-radius:40%;"></div><div class="a" style="left:22.1px;top:6.38px;width:2.93px;height:2.13px;background:#f0d8dc;border-radius:40%;"></div><div class="a" style="left:35.35px;top:8.2px;width:1.38px;height:2.99px;background:#c05a6a;border-radius:40%;"></div><div class="a" style="left:31.62px;top:5.18px;width:1.99px;height:3.26px;background:#a04050;border-radius:40%;"></div><div class="a" style="left:27.79px;top:4.68px;width:2.21px;height:3.49px;background:#a04050;border-radius:40%;"></div><div class="a" style="left:29.62px;top:4.0px;width:2.19px;height:2.86px;background:#c05a6a;border-radius:40%;"></div><div class="a" style="left:28.03px;top:12.94px;width:3.65px;height:2.26px;background:#a04050;border-radius:40%;"></div><div class="a" style="left:25.29px;top:10.91px;width:2.29px;height:1.22px;background:#8a2a3a;border-radius:40%;"></div><div class="a" style="left:29.18px;top:8.97px;width:3.23px;height:3.44px;background:#f0d8dc;border-radius:40%;"></div><div class="a" style="left:33.74px;top:10.68px;width:2.77px;height:3.47px;background:#f0d8dc;border-radius:40%;"></div><div class="a" style="left:28.24px;top:11.87px;width:3.86px;height:2.13px;background:#a04050;border-radius:40%;"></div><div class="a" style="left:23.45px;top:10.84px;width:2.59px;height:2.47px;background:#a04050;border-radius:40%;"></div><div class="a" style="left:21.78px;top:13.88px;width:3.26px;height:1.89px;background:#a04050;border-radius:40%;"></div><div class="a" style="left:22.67px;top:7.68px;width:1.72px;height:2.06px;background:#f0d8dc;border-radius:40%;"></div><div class="a" style="left:28.1px;top:5.37px;width:1.53px;height:1.25px;background:#c05a6a;border-radius:40%;"></div><div class="a" style="left:21.21px;top:7.28px;width:1.56px;height:2.43px;background:#f0d8dc;border-radius:40%;"></div><div class="a" style="left:23.99px;top:6.8px;width:2.36px;height:1.28px;background:#f0d8dc;border-radius:40%;"></div><div class="a" style="left:27.98px;top:7.41px;width:1.56px;height:3.38px;background:#f0d8dc;border-radius:40%;"></div><div class="a" style="left:33px;top:21.5px;width:5px;height:0.8px;background:#c8c8c0;"></div></div>

<!-- DARK AREA -->
<div class="a" style="left:79px;top:53px;width:539px;height:362px;background:#3c3c3c"></div>
<div class="a" style="left:79px;top:70px;width:110px;height:1px;background:#333"></div>
<div class="a" style="left:188px;top:53px;width:1px;height:18px;background:#353535"></div>
<div class="t" style="left:86.5px;top:57.3px;font-size:7.8px;color:#eceef0;transform:scaleX(0.9);transform-origin:0 0;-webkit-text-stroke:0.15px #eceef0">My Simple Light</div>
<svg class="a" style="left:177.3px;top:58.8px" width="4" height="6.5" viewBox="0 0 4 6.5"><path d="M0.2 2.6L2 0.4 3.8 2.6ZM0.2 3.9L2 6.1 3.8 3.9Z" fill="#707275"/></svg>
<div class="t" style="left:99.5px;top:75.5px;font-size:5.2px;font-weight:bold;color:#e8eaed">MASTER</div>
<div class="lthumb" style="left:99px;top:83px;width:78.5px;height:46px"><div class="a" style="left:52px;top:3px;width:20px;height:0.6px;background:#cfcfc5;"></div><div class="a" style="left:60px;top:39px;width:12px;height:0.8px;background:#c8c8c0;"></div></div>
<div class="t" style="left:109.5px;top:135.5px;font-size:5.2px;font-weight:bold;color:#e8eaed">LAYOUTS</div>
<div class="lthumb" style="left:109.5px;top:143.3px;width:67.5px;height:39.5px"><div class="a" style="left:4px;top:3.5px;width:21px;height:0.7px;background:#a2a29a;"></div><div class="a" style="left:6.5px;top:6.2px;width:17px;height:0.5px;background:#cfcfc7;"></div><div class="a" style="left:44px;top:2.5px;width:18px;height:0.5px;background:#d2d2ca;"></div><div class="a" style="left:50px;top:33.5px;width:12px;height:0.7px;background:#c4c4bc;"></div></div>
<div class="lthumb" style="left:109.5px;top:188.3px;width:67.5px;height:39.5px"><div class="a" style="left:4px;top:4.8px;width:20px;height:0.6px;background:#a2a29a;"></div><div class="a" style="left:5.0px;top:7.8px;width:4px;height:0.8px;background:#adada5;"></div><div class="a" style="left:7.3px;top:9.3px;width:5px;height:0.8px;background:#8a8a82;"></div><div class="a" style="left:9.6px;top:10.8px;width:6px;height:0.8px;background:#adada5;"></div><div class="a" style="left:11.899999999999999px;top:12.3px;width:4px;height:0.8px;background:#8a8a82;"></div><div class="a" style="left:14.2px;top:13.8px;width:5px;height:0.8px;background:#adada5;"></div><div class="a" style="left:16.5px;top:15.3px;width:6px;height:0.8px;background:#8a8a82;"></div><div class="a" style="left:18.799999999999997px;top:16.8px;width:4px;height:0.8px;background:#adada5;"></div><div class="a" style="left:21.099999999999998px;top:18.3px;width:5px;height:0.8px;background:#8a8a82;"></div><div class="a" style="left:23.4px;top:19.8px;width:6px;height:0.8px;background:#adada5;"></div><div class="a" style="left:25.7px;top:21.3px;width:4px;height:0.8px;background:#8a8a82;"></div><div class="a" style="left:44px;top:2.5px;width:18px;height:0.5px;background:#d2d2ca;"></div><div class="a" style="left:50px;top:33.5px;width:12px;height:0.7px;background:#c4c4bc;"></div></div>
<div class="lthumb" style="left:109.5px;top:233.3px;width:67.5px;height:39.5px"><div class="a" style="left:4px;top:4.8px;width:18px;height:0.8px;background:#5c5c56;"></div><div class="a" style="left:5.0px;top:8.3px;width:4px;height:0.8px;background:#adada5;"></div><div class="a" style="left:7.3px;top:9.8px;width:5px;height:0.8px;background:#8a8a82;"></div><div class="a" style="left:9.6px;top:11.3px;width:6px;height:0.8px;background:#adada5;"></div><div class="a" style="left:11.899999999999999px;top:12.8px;width:4px;height:0.8px;background:#8a8a82;"></div><div class="a" style="left:14.2px;top:14.3px;width:5px;height:0.8px;background:#adada5;"></div><div class="a" style="left:16.5px;top:15.8px;width:6px;height:0.8px;background:#8a8a82;"></div><div class="a" style="left:18.799999999999997px;top:17.3px;width:4px;height:0.8px;background:#adada5;"></div><div class="a" style="left:21.099999999999998px;top:18.8px;width:5px;height:0.8px;background:#8a8a82;"></div><div class="a" style="left:23.4px;top:20.3px;width:6px;height:0.8px;background:#adada5;"></div><div class="a" style="left:25.7px;top:21.8px;width:4px;height:0.8px;background:#8a8a82;"></div><div class="a" style="left:44px;top:2.5px;width:18px;height:0.5px;background:#d2d2ca;"></div><div class="a" style="left:50px;top:33.5px;width:12px;height:0.7px;background:#c4c4bc;"></div></div>
<div class="lthumb" style="left:109.5px;top:278.8px;width:67.5px;height:39.5px"><div class="a" style="left:4px;top:4.8px;width:15px;height:0.8px;background:#5c5c56;"></div><div class="a" style="left:5.0px;top:8.0px;width:4px;height:0.8px;background:#adada5;"></div><div class="a" style="left:7.3px;top:9.5px;width:5px;height:0.8px;background:#8a8a82;"></div><div class="a" style="left:9.6px;top:11.0px;width:6px;height:0.8px;background:#adada5;"></div><div class="a" style="left:11.899999999999999px;top:12.5px;width:4px;height:0.8px;background:#8a8a82;"></div><div class="a" style="left:14.2px;top:14.0px;width:5px;height:0.8px;background:#adada5;"></div><div class="a" style="left:16.5px;top:15.5px;width:6px;height:0.8px;background:#8a8a82;"></div><div class="a" style="left:18.799999999999997px;top:17.0px;width:4px;height:0.8px;background:#adada5;"></div><div class="a" style="left:21.099999999999998px;top:18.5px;width:5px;height:0.8px;background:#8a8a82;"></div><div class="a" style="left:32.0px;top:8.0px;width:4px;height:0.8px;background:#adada5;"></div><div class="a" style="left:34.3px;top:9.5px;width:5px;height:0.8px;background:#8a8a82;"></div><div class="a" style="left:36.6px;top:11.0px;width:6px;height:0.8px;background:#adada5;"></div><div class="a" style="left:38.9px;top:12.5px;width:4px;height:0.8px;background:#8a8a82;"></div><div class="a" style="left:41.2px;top:14.0px;width:5px;height:0.8px;background:#adada5;"></div><div class="a" style="left:43.5px;top:15.5px;width:6px;height:0.8px;background:#8a8a82;"></div><div class="a" style="left:45.8px;top:17.0px;width:4px;height:0.8px;background:#adada5;"></div><div class="a" style="left:48.099999999999994px;top:18.5px;width:5px;height:0.8px;background:#8a8a82;"></div><div class="a" style="left:44px;top:2.5px;width:18px;height:0.5px;background:#d2d2ca;"></div><div class="a" style="left:50px;top:33.5px;width:12px;height:0.7px;background:#c4c4bc;"></div></div>
<div class="lthumb" style="left:109.5px;top:323.9px;width:67.5px;height:39.5px"><div class="a" style="left:4px;top:4.8px;width:15px;height:0.8px;background:#5c5c56;"></div><div class="a" style="left:44px;top:2.5px;width:18px;height:0.5px;background:#d2d2ca;"></div><div class="a" style="left:50px;top:33.5px;width:12px;height:0.7px;background:#c4c4bc;"></div></div>
<div class="lthumb" style="left:109.5px;top:369.2px;width:67.5px;height:39.5px"><div class="a" style="left:4px;top:4.5px;width:18px;height:0.8px;background:#5c5c56;"></div><div class="a" style="left:5.0px;top:6.5px;width:4px;height:0.8px;background:#adada5;"></div><div class="a" style="left:6.8px;top:7.6px;width:5px;height:0.8px;background:#8a8a82;"></div><div class="a" style="left:8.6px;top:8.7px;width:6px;height:0.8px;background:#adada5;"></div><div class="a" style="left:10.4px;top:9.8px;width:4px;height:0.8px;background:#8a8a82;"></div><div class="a" style="left:12.2px;top:10.9px;width:5px;height:0.8px;background:#adada5;"></div><div class="a" style="left:14.0px;top:12.0px;width:6px;height:0.8px;background:#8a8a82;"></div><div class="a" style="left:16.0px;top:13px;width:0.8px;height:0.9px;background:#8a8a82;"></div><div class="a" style="left:16.6px;top:15px;width:0.8px;height:0.9px;background:#8a8a82;"></div><div class="a" style="left:17.2px;top:17px;width:0.8px;height:0.9px;background:#8a8a82;"></div><div class="a" style="left:17.8px;top:19px;width:0.8px;height:0.9px;background:#8a8a82;"></div><div class="a" style="left:18.4px;top:21px;width:0.8px;height:0.9px;background:#8a8a82;"></div><div class="a" style="left:19.0px;top:23px;width:0.8px;height:0.9px;background:#8a8a82;"></div><div class="a" style="left:19.6px;top:25px;width:0.8px;height:0.9px;background:#8a8a82;"></div><div class="a" style="left:19.6px;top:27px;width:0.8px;height:0.9px;background:#8a8a82;"></div><div class="a" style="left:19.6px;top:29px;width:0.8px;height:0.9px;background:#8a8a82;"></div><div class="a" style="left:19.6px;top:31px;width:0.8px;height:0.9px;background:#8a8a82;"></div><div class="a" style="left:19.6px;top:33px;width:0.8px;height:0.9px;background:#8a8a82;"></div><div class="a" style="left:44px;top:2.5px;width:18px;height:0.5px;background:#d2d2ca;"></div><div class="a" style="left:50px;top:33.5px;width:12px;height:0.7px;background:#c4c4bc;"></div></div>
<div class="a" style="left:183px;top:72.5px;width:4px;height:203px;border-radius:2px;background:#dadce0"></div>

<!-- editing header -->
<div class="t" style="left:196.8px;top:57.8px;font-size:7.4px;color:#eceef0;transform:scaleX(0.94);transform-origin:0 0;-webkit-text-stroke:0.15px #eceef0">Editing: My Simple Light - Master</div>
<div class="t" style="left:301.6px;top:59px;font-size:6.4px;color:#b6b8bb">(Used by all slides)</div>
<div class="a" style="left:362.7px;top:57px;width:34.5px;height:10px;background:#474747;border-radius:1px"></div>
<div class="t" style="left:367px;top:58.5px;font-size:7px;color:#e8eaed">Rename</div>
<svg class="a" style="left:602px;top:60px" width="5" height="5" viewBox="0 0 5 5"><path d="M0.4 0.4L4.6 4.6M4.6 0.4L0.4 4.6" stroke="#fff" stroke-width="1.1"/></svg>

<!-- ruler -->
<div class="a" style="left:189px;top:70.5px;width:429px;height:7px;background:#fff"></div>
<div class="a" style="left:189px;top:70.5px;width:7px;height:7px;background:#eef0f2"></div>
<div class="a" style="left:609.5px;top:70.5px;width:8px;height:7px;background:#e3e5e8"></div>
<div class="a" style="left:196px;top:77px;width:414px;height:1px;background:#e3e5e8"></div>
<div class="a" style="left:189px;top:77.5px;width:7px;height:337px;background:#fff"></div>
<div class="a" style="left:189px;top:406px;width:7px;height:8.5px;background:#e8eaed"></div>
<div class="a" style="left:199.68px;top:73.4px;width:0.8px;height:1.4px;background:#cfd2d5;"></div>
<div class="a" style="left:211.71px;top:73.4px;width:0.8px;height:1.4px;background:#cfd2d5;"></div>
<div class="t" style="left:222.15px;top:71.6px;font-size:5px;color:#5f6368">6</div>
<div class="a" style="left:235.79px;top:73.4px;width:0.8px;height:1.4px;background:#cfd2d5;"></div>
<div class="a" style="left:247.82px;top:73.4px;width:0.8px;height:1.4px;background:#cfd2d5;"></div>
<div class="a" style="left:259.86px;top:73.4px;width:0.8px;height:1.4px;background:#cfd2d5;"></div>
<div class="a" style="left:271.9px;top:72.3px;width:0.8px;height:3.2px;background:#b5b9be;"></div>
<div class="a" style="left:283.94px;top:73.4px;width:0.8px;height:1.4px;background:#cfd2d5;"></div>
<div class="a" style="left:295.98px;top:73.4px;width:0.8px;height:1.4px;background:#cfd2d5;"></div>
<div class="a" style="left:308.01px;top:73.4px;width:0.8px;height:1.4px;background:#cfd2d5;"></div>
<div class="t" style="left:318.45px;top:71.6px;font-size:5px;color:#5f6368">7</div>
<div class="a" style="left:332.09px;top:73.4px;width:0.8px;height:1.4px;background:#cfd2d5;"></div>
<div class="a" style="left:344.12px;top:73.4px;width:0.8px;height:1.4px;background:#cfd2d5;"></div>
<div class="a" style="left:356.16px;top:73.4px;width:0.8px;height:1.4px;background:#cfd2d5;"></div>
<div class="a" style="left:368.2px;top:72.3px;width:0.8px;height:3.2px;background:#b5b9be;"></div>
<div class="a" style="left:380.24px;top:73.4px;width:0.8px;height:1.4px;background:#cfd2d5;"></div>
<div class="a" style="left:392.27px;top:73.4px;width:0.8px;height:1.4px;background:#cfd2d5;"></div>
<div class="a" style="left:404.31px;top:73.4px;width:0.8px;height:1.4px;background:#cfd2d5;"></div>
<div class="t" style="left:414.75px;top:71.6px;font-size:5px;color:#5f6368">8</div>
<div class="a" style="left:428.39px;top:73.4px;width:0.8px;height:1.4px;background:#cfd2d5;"></div>
<div class="a" style="left:440.42px;top:73.4px;width:0.8px;height:1.4px;background:#cfd2d5;"></div>
<div class="a" style="left:452.46px;top:73.4px;width:0.8px;height:1.4px;background:#cfd2d5;"></div>
<div class="a" style="left:464.5px;top:72.3px;width:0.8px;height:3.2px;background:#b5b9be;"></div>
<div class="a" style="left:476.54px;top:73.4px;width:0.8px;height:1.4px;background:#cfd2d5;"></div>
<div class="a" style="left:488.57px;top:73.4px;width:0.8px;height:1.4px;background:#cfd2d5;"></div>
<div class="a" style="left:500.61px;top:73.4px;width:0.8px;height:1.4px;background:#cfd2d5;"></div>
<div class="t" style="left:511.05px;top:71.6px;font-size:5px;color:#5f6368">9</div>
<div class="a" style="left:524.69px;top:73.4px;width:0.8px;height:1.4px;background:#cfd2d5;"></div>
<div class="a" style="left:536.72px;top:73.4px;width:0.8px;height:1.4px;background:#cfd2d5;"></div>
<div class="a" style="left:548.76px;top:73.4px;width:0.8px;height:1.4px;background:#cfd2d5;"></div>
<div class="a" style="left:560.8px;top:72.3px;width:0.8px;height:3.2px;background:#b5b9be;"></div>
<div class="a" style="left:572.84px;top:73.4px;width:0.8px;height:1.4px;background:#cfd2d5;"></div>
<div class="a" style="left:584.88px;top:73.4px;width:0.8px;height:1.4px;background:#cfd2d5;"></div>
<div class="a" style="left:596.91px;top:73.4px;width:0.8px;height:1.4px;background:#cfd2d5;"></div>
<div class="a" style="left:191.8px;top:80.78px;width:1.4px;height:0.8px;background:#cfd2d5;"></div>
<div class="a" style="left:191.8px;top:92.81px;width:1.4px;height:0.8px;background:#cfd2d5;"></div>
<div class="a" style="left:190.8px;top:104.85px;width:3.2px;height:0.8px;background:#b5b9be;"></div>
<div class="a" style="left:191.8px;top:116.89px;width:1.4px;height:0.8px;background:#cfd2d5;"></div>
<div class="a" style="left:191.8px;top:128.93px;width:1.4px;height:0.8px;background:#cfd2d5;"></div>
<div class="a" style="left:191.8px;top:140.96px;width:1.4px;height:0.8px;background:#cfd2d5;"></div>
<div class="t" style="left:190.5px;top:149.50px;font-size:5px;color:#5f6368;transform:rotate(-90deg)">3</div>
<div class="a" style="left:191.8px;top:165.04px;width:1.4px;height:0.8px;background:#cfd2d5;"></div>
<div class="a" style="left:191.8px;top:177.07px;width:1.4px;height:0.8px;background:#cfd2d5;"></div>
<div class="a" style="left:191.8px;top:189.11px;width:1.4px;height:0.8px;background:#cfd2d5;"></div>
<div class="a" style="left:190.8px;top:201.15px;width:3.2px;height:0.8px;background:#b5b9be;"></div>
<div class="a" style="left:191.8px;top:213.19px;width:1.4px;height:0.8px;background:#cfd2d5;"></div>
<div class="a" style="left:191.8px;top:225.22px;width:1.4px;height:0.8px;background:#cfd2d5;"></div>
<div class="a" style="left:191.8px;top:237.26px;width:1.4px;height:0.8px;background:#cfd2d5;"></div>
<div class="t" style="left:190.5px;top:245.80px;font-size:5px;color:#5f6368;transform:rotate(-90deg)">4</div>
<div class="a" style="left:191.8px;top:261.34px;width:1.4px;height:0.8px;background:#cfd2d5;"></div>
<div class="a" style="left:191.8px;top:273.38px;width:1.4px;height:0.8px;background:#cfd2d5;"></div>
<div class="a" style="left:191.8px;top:285.41px;width:1.4px;height:0.8px;background:#cfd2d5;"></div>
<div class="a" style="left:190.8px;top:297.45px;width:3.2px;height:0.8px;background:#b5b9be;"></div>
<div class="a" style="left:191.8px;top:309.49px;width:1.4px;height:0.8px;background:#cfd2d5;"></div>
<div class="a" style="left:191.8px;top:321.52px;width:1.4px;height:0.8px;background:#cfd2d5;"></div>
<div class="a" style="left:191.8px;top:333.56px;width:1.4px;height:0.8px;background:#cfd2d5;"></div>
<div class="t" style="left:190.5px;top:342.10px;font-size:5px;color:#5f6368;transform:rotate(-90deg)">5</div>
<div class="a" style="left:191.8px;top:357.64px;width:1.4px;height:0.8px;background:#cfd2d5;"></div>
<div class="a" style="left:191.8px;top:369.67px;width:1.4px;height:0.8px;background:#cfd2d5;"></div>
<div class="a" style="left:191.8px;top:381.71px;width:1.4px;height:0.8px;background:#cfd2d5;"></div>
<div class="a" style="left:190.8px;top:393.75px;width:3.2px;height:0.8px;background:#b5b9be;"></div>
<!-- canvas -->
<div class="a" style="left:196px;top:78px;width:414px;height:328px;background:#f5f3e7"></div>
<!-- scrollbars -->
<div class="a" style="left:611.8px;top:78px;width:4px;height:326.5px;border-radius:2px;background:#dadce0"></div>
<div class="a" style="left:435px;top:408px;width:170.5px;height:4.2px;border-radius:2px;background:#dadce0"></div>

<!-- buttons -->
<div class="a" style="left:403px;top:362.5px;width:82px;height:27px;background:#ececec;box-shadow:1.8px 1.5px 1.8px rgba(0,0,0,.6)"></div>
<div class="a" style="left:498px;top:362.5px;width:82.5px;height:27px;background:#ececec;box-shadow:1.8px 1.5px 1.8px rgba(0,0,0,.6)"></div><div class="a" style="left:497.8px;top:362.5px;width:0.8px;height:27px;background:#9ec0f5"></div>
<div class="t" style="left:420.5px;top:371.2px;font-size:11.8px;color:#4f4f4f">Previous</div>
<div class="t" style="left:527.5px;top:371.2px;font-size:11.8px;color:#4f4f4f">Next</div>
<div class="a" style="left:402.7px;top:362.2px;width:178px;height:27.4px;border:1px solid #6d9eef"></div>
<div class="a" style="left:491px;top:351px;width:1px;height:11px;background:#5b93ee"></div>
<div class="a" style="left:489.5px;top:348.4px;width:4px;height:4px;border-radius:50%;background:#1a73e8"></div>
<div class="h" style="left:401.1px;top:360.6px"></div>
<div class="h" style="left:489.85px;top:360.6px"></div>
<div class="h" style="left:578.85px;top:360.6px"></div>
<div class="h" style="left:401.1px;top:374.3px"></div>
<div class="h" style="left:578.85px;top:374.3px"></div>
<div class="h" style="left:401.1px;top:388px"></div>
<div class="h" style="left:489.85px;top:388px"></div>
<div class="h" style="left:578.85px;top:388px"></div>

<!-- FORMAT OPTIONS -->
<div class="a" style="left:618px;top:33px;width:150px;height:382px;background:#f8f9fa"></div>
<div class="a" style="left:618px;top:33px;width:150px;height:28px;background:#fff"></div>
<div class="a" style="left:618px;top:61px;width:150px;height:1px;background:#e3e5e8"></div>
<div class="a" style="left:768px;top:33px;width:1px;height:382px;background:#e3e5e8"></div>
<svg class="a" style="left:626.8px;top:42.3px" width="9.6" height="9.4" viewBox="0 0 9.6 9.4"><rect x="1" y="1" width="7.6" height="7.4" fill="none" stroke="#f29900" stroke-width="0.9"/><rect x="0" y="0" width="2.3" height="2.3" fill="#f29900"/><rect x="7.3" y="0" width="2.3" height="2.3" fill="#f29900"/><rect x="0" y="7.1" width="2.3" height="2.3" fill="#f29900"/><rect x="7.3" y="7.1" width="2.3" height="2.3" fill="#f29900"/><path d="M3.3 7L4.8 2.6 6.3 7M3.8 5.5H5.8" fill="none" stroke="#f29900" stroke-width="0.8"/></svg><div class="a" style="left:617.5px;top:33px;width:1px;height:20px;background:#e3e5e8"></div>
<div class="t" style="left:644.5px;top:43px;font-size:8.3px;color:#3c4043">Format options</div>
<svg class="a" style="left:751px;top:43px" width="7" height="7" viewBox="0 0 7 7"><path d="M0.5 0.5L6.5 6.5M6.5 0.5L0.5 6.5" stroke="#5f6368" stroke-width="1.1"/></svg>

<svg class="a" style="left:629.5px;top:72.3px" width="6" height="9" viewBox="0 0 6 9"><path d="M0.9 0.7L4.6 4.5 0.9 8.3" fill="none" stroke="#5f6368" stroke-width="1.15"/></svg>
<div class="fo-row" style="left:645.5px;top:72.8px">Size &amp; Rotation</div>
<svg class="a" style="left:629.5px;top:101.8px" width="6" height="9" viewBox="0 0 6 9"><path d="M0.9 0.7L4.6 4.5 0.9 8.3" fill="none" stroke="#5f6368" stroke-width="1.15"/></svg>
<div class="fo-row" style="left:645.5px;top:101.5px">Position</div>
<svg class="a" style="left:629.5px;top:131.3px" width="6" height="9" viewBox="0 0 6 9"><path d="M0.9 0.7L4.6 4.5 0.9 8.3" fill="none" stroke="#5f6368" stroke-width="1.15"/></svg>
<div class="fo-row" style="left:645.5px;top:131.6px;letter-spacing:0.25px">Text fitting</div>

<!-- drop shadow card -->
<div class="a" style="left:619px;top:151px;width:149px;height:155.5px;background:#fff;border-radius:0 0 4px 4px;box-shadow:0 1px 2px rgba(60,64,67,.25)"></div>
<svg class="a" style="left:628px;top:162.8px" width="9" height="6" viewBox="0 0 9 6"><path d="M0.7 0.9L4.5 4.6 8.3 0.9" fill="none" stroke="#5f6368" stroke-width="1.15"/></svg>
<div class="fo-row" style="left:645.5px;top:161px">Drop shadow</div>
<div class="a" style="left:751px;top:161px;width:9.5px;height:9.5px;background:#202124;border-radius:1px"></div>
<svg class="a" style="left:752.5px;top:163px" width="7" height="6" viewBox="0 0 7 6"><path d="M0.8 3L2.6 4.8 6.2 1" fill="none" stroke="#fff" stroke-width="1.1"/></svg>

<div class="lbl" style="top:189.8px;color:#80868b">Color</div>
<div class="a" style="left:735.5px;top:182.5px;width:24px;height:17.5px;border:1px solid #eceef0;border-radius:2px;background:#fff"></div>
<div class="a" style="left:738.5px;top:186px;width:11px;height:11px;border-radius:50%;background:#000"></div>
<div class="dd" style="left:752.5px;top:190.5px;border-top-color:#5f6368"></div>
<div class="lbl" style="top:206.5px">Transparency</div>
<div class="sl" style="top:219px"></div>
<div class="knob" style="left:688.5px;top:215px;border-color:#8ab4f8;background:#e8eaed"></div>
<div class="lbl" style="top:230.5px">Angle</div>
<div class="sl" style="top:243px"></div>
<div class="knob" style="left:634px;top:239px"></div>
<div class="lbl" style="top:254.5px">Distance</div>
<div class="sl" style="top:267px"></div>
<div class="knob" style="left:628.5px;top:263px"></div>
<div class="lbl" style="top:278.5px">Blur Radius</div>
<div class="sl" style="top:291px"></div>
<div class="knob" style="left:628.5px;top:287px"></div>

<svg class="a" style="left:629.8px;top:317.8px" width="6" height="9" viewBox="0 0 6 9"><path d="M0.9 0.7L4.6 4.5 0.9 8.3" fill="none" stroke="#5f6368" stroke-width="1.15"/></svg>
<div class="fo-row" style="left:645.5px;top:317.8px">Reflection</div>
<div class="a" style="left:751px;top:317px;width:9.5px;height:9.5px;border:1.6px solid #5f6368;border-radius:1px"></div>

<!-- RIGHT SIDE PANEL -->
<div class="a" style="left:769px;top:33px;width:27px;height:382px;background:#fff"></div>
<svg class="a" style="left:779px;top:43.5px" width="8" height="7.5" viewBox="0 0 8 7.5"><rect x="0" y="0" width="8" height="7.5" rx="0.6" fill="#4285f4"/><rect x="0" y="0" width="8" height="1.6" fill="#1967d2"/><text x="4" y="6.3" font-size="4.5" text-anchor="middle" fill="#fff" font-family="Liberation Sans">31</text></svg>
<svg class="a" style="left:779px;top:70.5px" width="8.5" height="8.5" viewBox="0 0 8.5 8.5"><path d="M0 0H8.5V6L6 8.5H0Z" fill="#fbbc04"/><circle cx="4.2" cy="3.6" r="1.7" fill="none" stroke="#fff" stroke-width="0.7"/><path d="M3.5 5.5H5" stroke="#fff" stroke-width="0.7"/></svg>
<svg class="a" style="left:778.5px;top:98.3px" width="9.5" height="9.5" viewBox="0 0 9.5 9.5"><circle cx="4.75" cy="4.75" r="4.75" fill="#4285f4"/><path d="M2.6 4.9L4.1 6.3 7 3.3" fill="none" stroke="#fff" stroke-width="1.1"/><circle cx="2.5" cy="4.2" r="0.7" fill="#fbbc04"/></svg>
<svg class="a" style="left:780.8px;top:397.6px" width="4.5" height="6.5" viewBox="0 0 4.5 6.5"><path d="M0.7 0.7L3.4 3.25 0.7 5.8" fill="none" stroke="#6f7378" stroke-width="1.25"/></svg>

<div class="a" style="left:738.8px;top:146.9px;width:35.8px;height:36px;border-radius:50%;border:3.2px solid #f8f800;box-shadow:0 0 2.5px 0.3px rgba(0,0,0,.6),inset 0 0 2.5px 0.3px rgba(0,0,0,.6)"></div>
<!-- FRAME -->
<div class="a" style="left:0;top:0;width:3.6px;height:418px;background:linear-gradient(#4b4f54 0,#4b4f54 30px,#85888c 50px,#cfd1d4 77px,#11161b 78px,#0f1318 100%)"></div>
<div class="a" style="left:0;top:78px;width:1px;height:340px;background:#5e6267"></div><div class="a" style="left:799px;top:78px;width:1px;height:340px;background:#5e6267"></div>
<div class="a" style="left:796.3px;top:0;width:3.7px;height:418px;background:linear-gradient(#3f4348 0,#44484d 30px,#85888c 50px,#cfd1d4 77px,#11161b 78px,#0f1318 100%)"></div>
<div class="a" style="left:0;top:414.3px;width:800px;height:3.7px;background:linear-gradient(#0f1318 0,#0f1318 60%,#6a6e73 80%,#6a6e73 100%)"></div>
</body></html>
